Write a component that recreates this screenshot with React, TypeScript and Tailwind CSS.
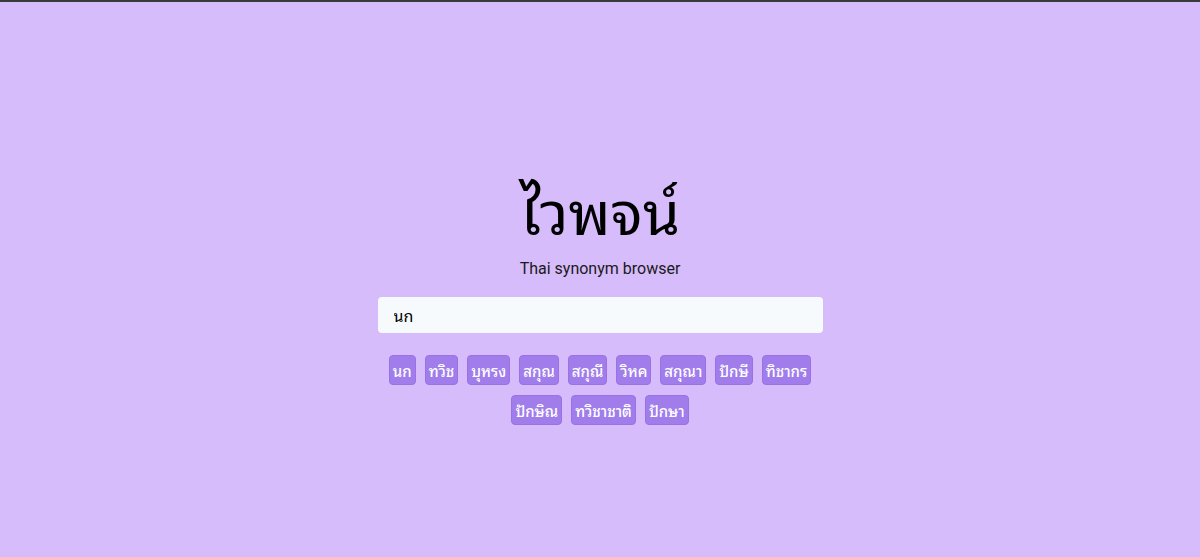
import * as React from "react"

const words = ["นก", "ทวิช", "บุหรง", "สกุณ", "สกุณี", "วิหค", "สกุณา", "ปักษี", "ทิชากร", "ปักษิณ", "ทวิชาชาติ", "ปักษา"]

export default function App() {
  const [query, setQuery] = React.useState("นก")

  return (
    <div className="min-h-[557px] bg-[#d6bcfa] border-t-2 border-[#3a3a3a] flex flex-col items-center pt-[166px] font-['Roboto','Noto_Sans_Thai_Looped',sans-serif]">
      <h1 className="text-[60px] leading-[80px] font-normal text-black font-['Noto_Sans_Thai_Looped',Roboto,sans-serif]">ไวพจน์</h1>
      <p className="mt-[9px] text-base text-[#1a1a1a]">Thai synonym browser</p>

      <input
        className="mt-[16px] w-[445px] h-[36px] rounded bg-[#f7fafc] px-4 text-base text-black outline-none font-['Noto_Sans_Thai_Looped',Roboto,sans-serif]"
        value={query}
        onChange={e => setQuery(e.target.value)}
      />

      {/* synonyms */}
      <div className="mt-[22px] w-[470px] flex flex-wrap justify-center gap-x-[9px] gap-y-[10px]">
        {words.map(w => (
          <button
            key={w}
            className="h-[30px] px-[3px] rounded border border-[#9a72e6] bg-[#a07deb] text-white text-[15px] font-medium font-['Noto_Sans_Thai_Looped',Roboto,sans-serif]"
          >
            {w}
          </button>
        ))}
      </div>
    </div>
  )
}
